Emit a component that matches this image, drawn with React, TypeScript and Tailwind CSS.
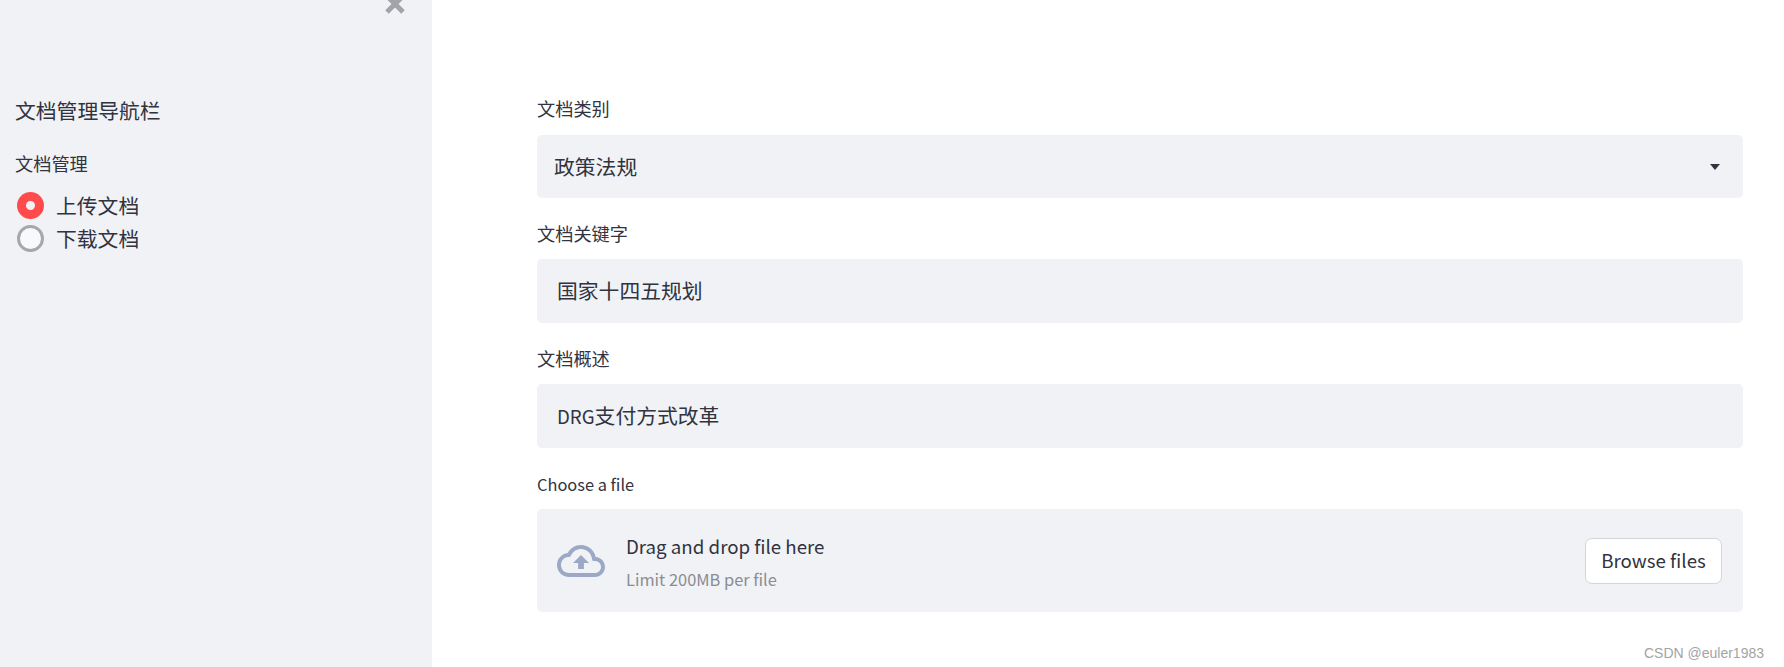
import type {ReactNode} from 'react';

const cjk = "font-['Noto_Sans_CJK_SC','Noto_Sans',sans-serif]";

function FieldLabel({text}: {text: string}) {
  return <div className="h-[26px] text-[18.2px] leading-[26px]">{text}</div>;
}

function TextBox({children}: {children: ReactNode}) {
  return (
    <div className="mt-[13px] flex h-[64px] items-center rounded-[5px] bg-[#f0f2f6] pl-[20px] text-[20.8px]">
      <span>{children}</span>
    </div>
  );
}

function Radio({label, checked}: {label: string; checked?: boolean}) {
  return (
    <div className="flex h-[33px] items-center">
      {checked ? (
        <span className="flex size-[27px] items-center justify-center rounded-full bg-[#ff4b4b]">
          <span className="size-[9px] rounded-full bg-[#f0f2f6]" />
        </span>
      ) : (
        <span className="size-[27px] rounded-full border-[3px] border-[#a6a6ae] bg-[#f9f9fb]" />
      )}
      <span className="ml-[12px] text-[20.8px]">{label}</span>
    </div>
  );
}

export default function App() {
  return (
    <div className={`relative flex h-[667px] w-full overflow-hidden bg-white text-[#31333f] ${cjk}`}>
      <aside className="w-[432px] shrink-0 bg-[#f0f2f6] pl-[15px]">
        <div className="flex h-[95px] justify-end pr-[26px]">
          <svg width="22" height="22" viewBox="0 0 22 22" className="-mt-[7px]" aria-hidden="true">
            <path d="M3 3 L19 19 M19 3 L3 19" stroke="#a3a4aa" strokeWidth="5" />
          </svg>
        </div>
        <div className="h-[30px] text-[20.8px] leading-[30px]">文档管理导航栏</div>
        <div className="mt-[25px] h-[26px] text-[18.2px] leading-[26px]">文档管理</div>
        <div className="mt-[13px] pl-[2px]">
          <Radio label="上传文档" checked />
          <Radio label="下载文档" />
        </div>
      </aside>

      <main className="flex-1 pl-[105px] pr-[41px] pt-[95px]">
        <FieldLabel text="文档类别" />
        <div className="mt-[14px] flex h-[63px] items-center justify-between rounded-[5px] bg-[#f0f2f6] pl-[17px] pr-[23px] text-[20.8px]">
          <span>政策法规</span>
          <svg width="10" height="6" viewBox="0 0 10 6" aria-hidden="true">
            <path d="M0 0 H10 L5 6 Z" fill="#31333f" />
          </svg>
        </div>

        <div className="mt-[22px]">
          <FieldLabel text="文档关键字" />
          <TextBox>国家十四五规划</TextBox>
        </div>

        <div className="mt-[22px]">
          <FieldLabel text="文档概述" />
          <TextBox>
            <span className="text-[18.7px]">DRG</span>支付方式改革
          </TextBox>
        </div>

        <div className="mt-[24px] h-[24px] text-[16.4px] leading-[24px]">Choose a file</div>
        <div className="mt-[13px] flex h-[103px] items-center justify-between rounded-[5px] bg-[#f0f2f6] pl-[20px] pr-[21px]">
          <div className="flex items-center">
            <svg width="48" height="48" viewBox="0 0 24 24" fill="#9ba9c6" aria-hidden="true">
              <path d="M19.35 10.04C18.67 6.59 15.64 4 12 4 9.11 4 6.6 5.64 5.35 8.04 2.34 8.36 0 10.91 0 14c0 3.31 2.69 6 6 6h13c2.76 0 5-2.24 5-5 0-2.64-2.05-4.78-4.65-4.96zM19 18H6c-2.21 0-4-1.79-4-4 0-2.05 1.53-3.76 3.56-3.97l1.07-.11.5-.95C8.08 7.14 9.94 6 12 6c2.62 0 4.88 1.86 5.39 4.43l.3 1.5 1.53.11c1.56.1 2.78 1.41 2.78 2.96 0 1.65-1.35 3-3 3zM8 13h2.55v3h2.9v-3H16l-4-4z" />
            </svg>
            <div className="ml-[21px]">
              <div className="text-[18.7px] leading-[30px]">Drag and drop file here</div>
              <div className="mt-[6px] text-[16.4px] leading-[24px] text-[#8b8c94]">Limit 200MB per file</div>
            </div>
          </div>
          <button className="h-[46px] w-[137px] rounded-[7px] border border-[#d4d5d9] bg-white text-[18.7px]">
            Browse files
          </button>
        </div>
      </main>

      <div className="absolute bottom-[5px] right-[20px] font-['Liberation_Sans',sans-serif] text-[14px] leading-[18px] text-[#a3a3a3]">
        CSDN @euler1983
      </div>
    </div>
  );
}
